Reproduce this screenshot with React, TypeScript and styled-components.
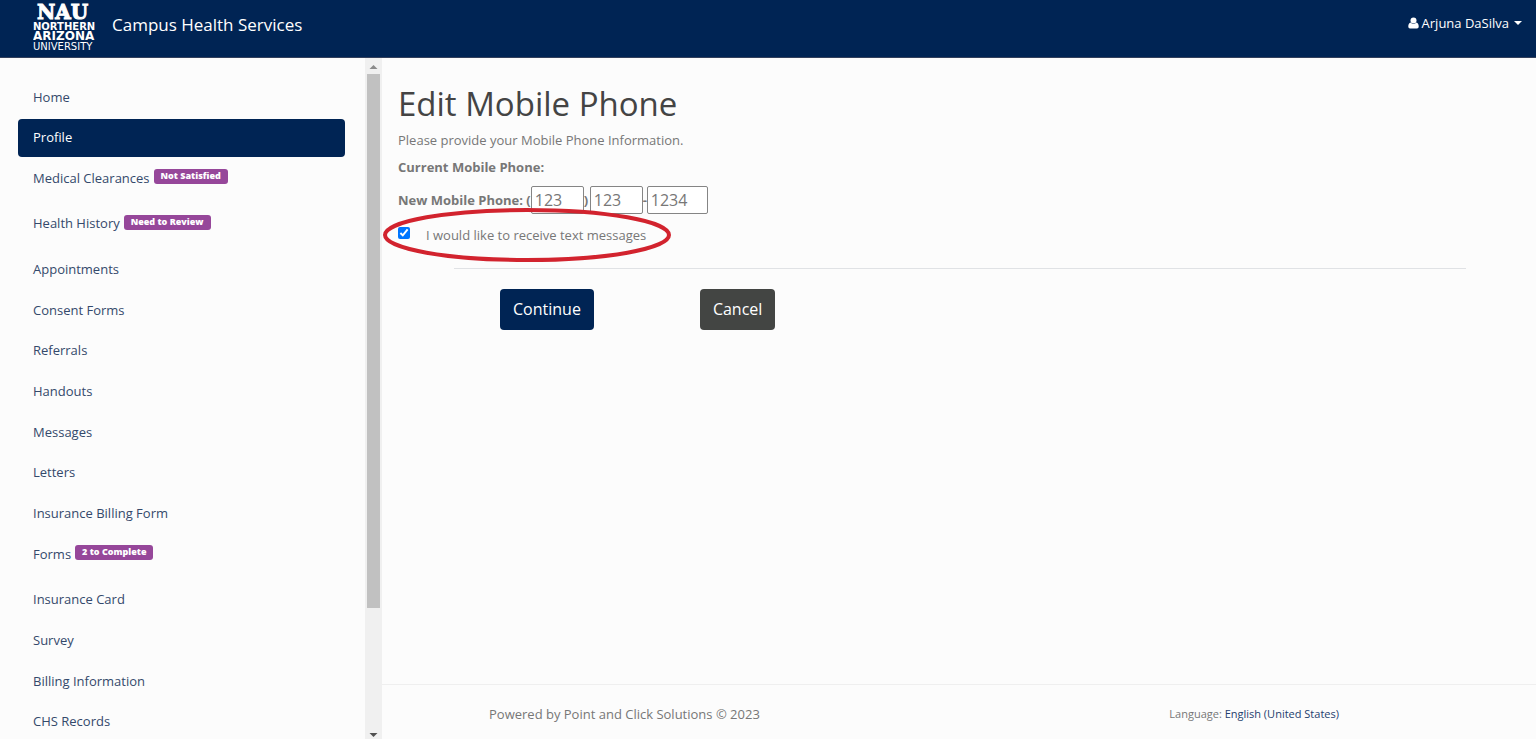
import React, { useState } from "react";
import styled, { createGlobalStyle } from "styled-components";

const navy = "#002454";

const GlobalStyle = createGlobalStyle`
  *, *::before, *::after { box-sizing: border-box; }
  body {
    margin: 0;
    background: #fcfcfc;
    color: #777;
    font: 13px/20px "Open Sans", "Noto Sans", sans-serif;
  }
`;

const Page = styled.div`
  display: flex;
  flex-direction: column;
  height: 100vh;
`;

const Header = styled.header`
  display: flex;
  flex: none;
  justify-content: space-between;
  height: 58px;
  padding: 0 14px 0 33px;
  background: ${navy};
  border-bottom: 1px solid #33405c;
  color: #fff;
`;

const Brand = styled.a`
  display: flex;
  gap: 15px;
  color: inherit;
  text-decoration: none;
`;

const Logo = styled.svg`
  width: 64px;
  height: 52px;
  fill: #fff;
`;

const BrandName = styled.span`
  padding-top: 13px;
  font-size: 17px;
  line-height: 24px;
`;

const UserMenu = styled.button`
  display: flex;
  align-items: center;
  align-self: flex-start;
  gap: 3px;
  margin-top: 13px;
  padding: 0;
  border: 0;
  background: none;
  color: inherit;
  font: inherit;
  cursor: pointer;
`;

const Caret = styled.svg`
  width: 8px;
  height: 4px;
  margin-left: 2px;
  fill: currentColor;
`;

const Body = styled.div`
  display: flex;
  flex: 1;
  min-height: 0;
`;

const Sidebar = styled.aside`
  display: flex;
  flex: none;
  width: 25%;
  max-width: 382px;
`;

const Nav = styled.nav`
  flex: 1;
  overflow-y: auto;
  scrollbar-width: none;
  padding: 20px 20px 0 18px;
`;

const NavList = styled.ul`
  display: flex;
  flex-direction: column;
  justify-content: space-between;
  min-height: 663px;
  margin: 0;
  padding: 0;
  list-style: none;
`;

const NavLink = styled.a<{ $active?: boolean; $tall?: boolean }>`
  display: flex;
  align-items: center;
  gap: 4px;
  height: ${(p) => (p.$tall ? 43 : 38)}px;
  padding: 0 15px ${(p) => (p.$tall ? 6 : 1)}px;
  border-radius: 4px;
  background: ${(p) => (p.$active ? navy : "transparent")};
  color: ${(p) => (p.$active ? "#fff" : "#34496b")};
  text-decoration: none;
`;

const Badge = styled.span`
  height: 15px;
  margin-bottom: 2px;
  padding: 0 7px;
  border-radius: 3px;
  background: #96479a;
  color: #fff;
  font-size: 9px;
  font-weight: 800;
  line-height: 14px;
`;

const ScrollBar = styled.div`
  display: flex;
  flex: none;
  flex-direction: column;
  align-items: center;
  width: 17px;
  background: #f0f0f0;
`;

const Track = styled.div`
  flex: 1;
  width: 13px;
`;

const Thumb = styled.div`
  height: 82%;
  background: #c1c1c1;
`;

const Arrow = styled.svg<{ $muted?: boolean }>`
  width: 17px;
  height: ${(p) => (p.$muted ? 16 : 14)}px;
  fill: ${(p) => (p.$muted ? "#8a8a8a" : "#505050")};
`;

const Main = styled.div`
  display: flex;
  flex: 1;
  flex-direction: column;
  min-width: 0;
`;

const Content = styled.main`
  flex: 1;
  padding: 24px 14px 0 16px;
`;

const Title = styled.h1`
  margin: 0;
  color: #444;
  font-size: 33px;
  font-weight: 400;
  line-height: 44px;
`;

const Line = styled.p`
  margin: 4px 0 7px;
`;

const FieldRow = styled.div`
  display: flex;
  align-items: center;
  margin-top: 9px;
  font-weight: 700;
`;

const PhoneInput = styled.input<{ $wide?: boolean }>`
  width: ${(p) => (p.$wide ? 61 : 53)}px;
  height: 28px;
  padding: 0 3px;
  border: 1px solid #858585;
  border-radius: 2px;
  background: #fff;
  color: #777;
  font: 16px/24px "Open Sans", "Noto Sans", sans-serif;
`;

const Separator = styled.span<{ $width: number }>`
  width: ${(p) => p.$width}px;
`;

const OptIn = styled.div`
  position: relative;
  display: flex;
  align-items: center;
  margin-top: 11px;
`;

const Tick = styled.input`
  width: 12px;
  height: 12px;
  margin: 0 16px 4px 0;
`;

const Highlight = styled.svg`
  position: absolute;
  top: -18px;
  left: -16px;
  width: 290px;
  height: 56px;
  fill: none;
  stroke: #d2232e;
  stroke-width: 4;
  pointer-events: none;
`;

const Rule = styled.hr`
  margin: 23px 5% 20px;
  border: 0;
  border-top: 1px solid #e0e2e5;
`;

const Actions = styled.div`
  display: flex;
  gap: 106px;
  padding-left: 102px;
`;

const Button = styled.button<{ $dark?: boolean }>`
  height: 41px;
  padding: 0 13px 2px;
  border: 0;
  border-radius: 4px;
  background: ${(p) => (p.$dark ? "#434543" : navy)};
  color: #fff;
  font: 16px/24px "Open Sans", "Noto Sans", sans-serif;
  cursor: pointer;
`;

const Footer = styled.footer`
  display: flex;
  flex: none;
  align-items: center;
  justify-content: space-between;
  height: 55px;
  padding: 4px 197px 0 107px;
  border-top: 1px solid #efefef;
`;

const Language = styled.span`
  font-size: 11px;

  a {
    color: #24406e;
    text-decoration: none;
  }
`;

const items: { label: string; badge?: string; active?: boolean }[] = [
  { label: "Home" },
  { label: "Profile", active: true },
  { label: "Medical Clearances", badge: "Not Satisfied" },
  { label: "Health History", badge: "Need to Review" },
  { label: "Appointments" },
  { label: "Consent Forms" },
  { label: "Referrals" },
  { label: "Handouts" },
  { label: "Messages" },
  { label: "Letters" },
  { label: "Insurance Billing Form" },
  { label: "Forms", badge: "2 to Complete" },
  { label: "Insurance Card" },
  { label: "Survey" },
  { label: "Billing Information" },
  { label: "CHS Records" },
];

export default function App() {
  const [optIn, setOptIn] = useState(true);

  return (
    <>
      <GlobalStyle />
      <Page>
        <Header>
          <Brand href="#home">
            <Logo viewBox="0 0 64 52" role="img" aria-label="Northern Arizona University">
              <g fontFamily="DejaVu Sans" fontWeight="700">
                <text x="4" y="19" fontSize="20" fontFamily="DejaVu Serif" stroke="#fff">
                  NAU
                </text>
                <text x="0" y="30" fontSize="10">NORTHERN</text>
                <text x="0" y="40" fontSize="12">ARIZONA</text>
                <text x="0" y="50" fontSize="10" fontWeight="400">UNIVERSITY</text>
              </g>
            </Logo>
            <BrandName>Campus Health Services</BrandName>
          </Brand>
          <UserMenu type="button" aria-haspopup="menu">
            <svg width="11" height="12" viewBox="0 0 11 12" fill="currentColor" aria-hidden="true">
              <circle cx="5.5" cy="3.5" r="3" />
              <path d="M2.6 5.6C1 6 .3 7.600.3 9.600c0 1.300.7 1.900 1.700 1.900h7c1 0 1.700-.6 1.700-1.900C10.700 7.600 10 6 8.400 5.600 7.600 6.500 6.600 7 5.500 7S3.400 6.500 2.600 5.600Z" />
            </svg>
            Arjuna DaSilva
            <Caret viewBox="0 0 8 4" aria-hidden="true">
              <path d="M0 0h8L4 4Z" />
            </Caret>
          </UserMenu>
        </Header>
        <Body>
          <Sidebar>
            <Nav aria-label="Main">
              <NavList>
                {items.map((item) => (
                  <li key={item.label}>
                    <NavLink
                      href="#"
                      $active={item.active}
                      $tall={Boolean(item.badge)}
                      aria-current={item.active ? "page" : undefined}
                    >
                      {item.label}
                      {item.badge && <Badge>{item.badge}</Badge>}
                    </NavLink>
                  </li>
                ))}
              </NavList>
            </Nav>
            <ScrollBar aria-hidden="true">
              <Arrow $muted viewBox="0 0 17 16">
                <path d="M4.500 11h8l-4-4Z" />
              </Arrow>
              <Track>
                <Thumb />
              </Track>
              <Arrow viewBox="0 0 17 14">
                <path d="M4.500 8h8l-4 4Z" />
              </Arrow>
            </ScrollBar>
          </Sidebar>
          <Main>
            <Content>
              <Title>Edit Mobile Phone</Title>
              <Line>Please provide your Mobile Phone Information.</Line>
              <Line>
                <b>Current Mobile Phone:</b>
              </Line>
              <FieldRow role="group" aria-label="New Mobile Phone">
                <label htmlFor="area">New Mobile Phone: (</label>
                <PhoneInput id="area" defaultValue="123" inputMode="numeric" />
                <Separator $width={6}>)</Separator>
                <PhoneInput aria-label="Prefix" defaultValue="123" inputMode="numeric" />
                <Separator $width={4}>-</Separator>
                <PhoneInput $wide aria-label="Line number" defaultValue="1234" inputMode="numeric" />
              </FieldRow>
              <OptIn>
                <Tick
                  id="texts"
                  type="checkbox"
                  checked={optIn}
                  onChange={(e) => setOptIn(e.target.checked)}
                />
                <label htmlFor="texts">I would like to receive text messages</label>
                <Highlight viewBox="0 0 290 56" aria-hidden="true">
                  <ellipse cx="145" cy="28" rx="142" ry="25" />
                </Highlight>
              </OptIn>
              <Rule />
              <Actions>
                <Button type="button">Continue</Button>
                <Button type="button" $dark>
                  Cancel
                </Button>
              </Actions>
            </Content>
            <Footer>
              <span>Powered by Point and Click Solutions © 2023</span>
              <Language>
                Language: <a href="#language">English (United States)</a>
              </Language>
            </Footer>
          </Main>
        </Body>
      </Page>
    </>
  );
}
